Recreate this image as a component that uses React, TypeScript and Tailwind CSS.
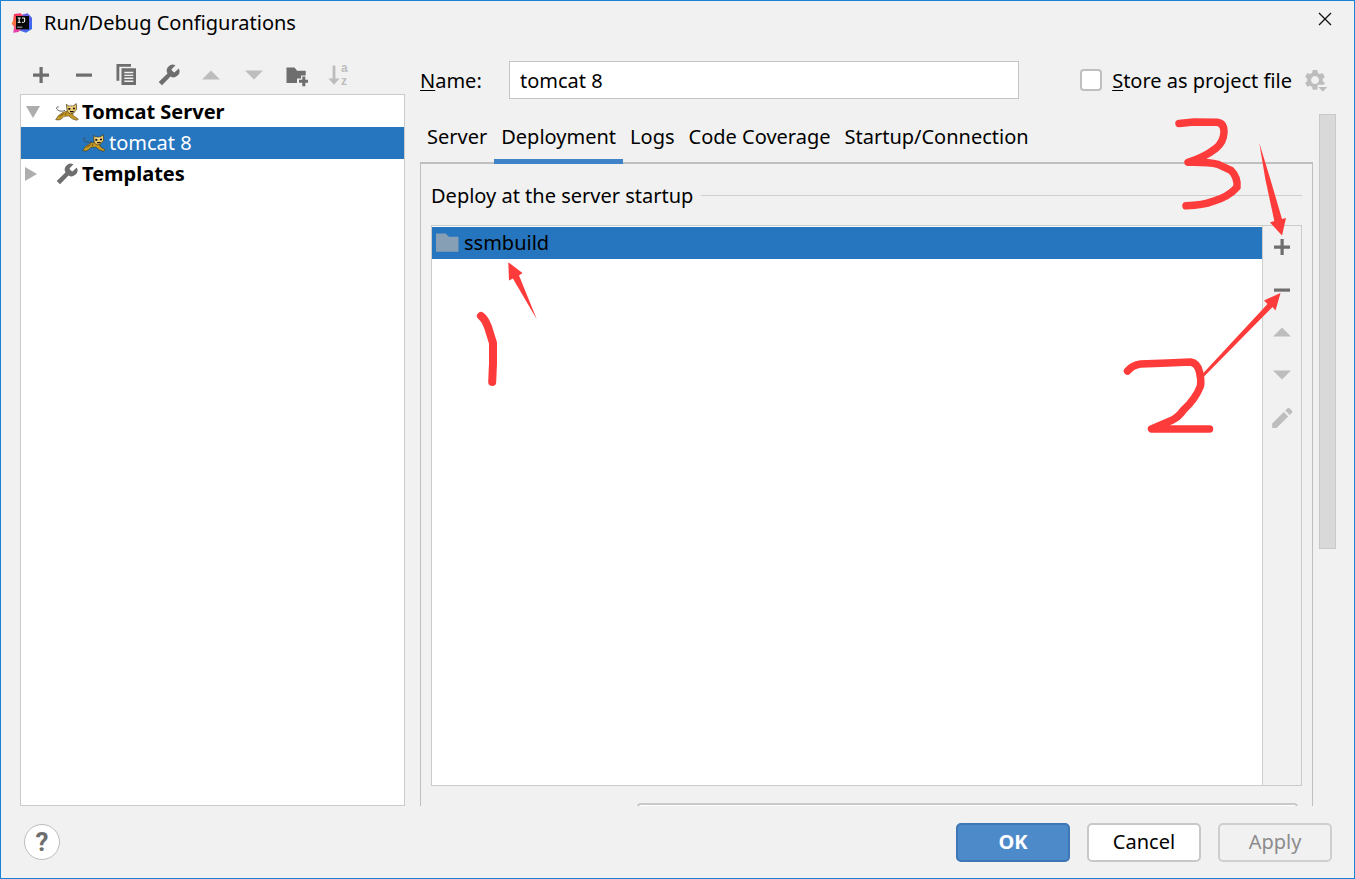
import React, { useState } from "react";

type IconProps = { className?: string };

const PlusIcon = ({ className = "size-6" }: IconProps) => (
  <svg viewBox="0 0 24 24" className={className} fill="currentColor" aria-hidden="true">
    <path d="M10.500 4h3.200v6.500h6.300v3.200h-6.300V20h-3.200v-6.300H4v-3.200h6.500z" />
  </svg>
);

const MinusIcon = () => (
  <svg viewBox="0 0 24 24" className="size-6" fill="currentColor" aria-hidden="true">
    <path d="M4 10.500h16v3.200H4z" />
  </svg>
);

const CopyIcon = () => (
  <svg viewBox="0 0 24 24" className="size-6" fill="currentColor" aria-hidden="true">
    <path d="M2.500 1H17v2.800H5.300v14H2.500z" />
    <path
      fillRule="evenodd"
      d="M7.500 5.300H22V22H7.500zM10.300 8.800v1.400h9V8.800zM10.300 11.700v1.400h9v-1.400zM10.300 14.600v1.400h9v-1.400zM10.300 17.500v1.400h9v-1.400z"
    />
  </svg>
);

const WrenchIcon = () => (
  <svg viewBox="0 0 24 24" className="size-6" fill="currentColor" aria-hidden="true">
    <path d="M14.900 6.100a1 1 0 0 0 0 1.400l1.600 1.600a1 1 0 0 0 1.400 0l3.900-3.600a6 6 0 0 1-8.300 8L5 22.200 1.700 18.900l8.800-8.400a6 6 0 0 1 8-8.200z" />
  </svg>
);

const UpIcon = () => (
  <svg viewBox="0 0 24 24" className="size-6" fill="currentColor" aria-hidden="true">
    <path d="M3 16.600h18L12 7.600z" />
  </svg>
);

const DownIcon = () => (
  <svg viewBox="0 0 24 24" className="size-6" fill="currentColor" aria-hidden="true">
    <path d="M3 7.600h18l-9 9z" />
  </svg>
);

const NewFolderIcon = () => (
  <svg viewBox="0 0 24 24" className="size-6" fill="currentColor" aria-hidden="true">
    <path d="M2.500 4.500h8l2.600 3.200h8.600v4.800h-4.600v3H13V20H2.500z" />
    <path d="M18.300 13.500h3v3.300h3.200v3h-3.200v3.400h-3v-3.400H15v-3h3.300z" />
  </svg>
);

const SortIcon = () => (
  <svg viewBox="0 0 24 24" className="size-6" fill="currentColor" overflow="visible" aria-hidden="true">
    <path d="M5.600 2.500h2.800v13.100h4.200L7 21.800l-5.600-6.200h4.200z" />
    <text x="14" y="9" className="font-['Liberation_Sans'] text-[12px] font-bold">a</text>
    <text x="14" y="22" className="font-['Liberation_Sans'] text-[12px] font-bold">z</text>
  </svg>
);

const PencilIcon = () => (
  <svg viewBox="0 0 24 24" className="size-6" fill="currentColor" aria-hidden="true">
    <path d="M2.200 17.600 13.800 6l4.400 4.400L6.600 22H2.200zM15.200 4.600l2.300-2.300q1-.8 2 0l2.500 2.500q.8 1 0 2L19.700 9.100z" />
  </svg>
);

const GearIcon = () => (
  <svg viewBox="0 0 24 24" className="size-6" fill="currentColor" aria-hidden="true">
    <path
      fillRule="evenodd"
      d="M8.700 2h4.600l.6 2.900 1.900 1.100 2.800-1 2.300 3.900-2.200 2v2.200l2.200 2-.9 1.700h-6.200l-.3 2.800-.2 2.200H8.700l-.6-2.900-1.900-1.100-2.800 1-2.300-3.900 2.200-2v-2.200l-2.200-2L3.400 5l2.800 1 1.900-1.100zM11 8a4 4 0 1 0 .01 0z"
    />
    <path d="M14.300 19h9l-4.500 4.700z" />
  </svg>
);

const FolderIcon = () => (
  <svg viewBox="0 0 24 24" className="size-6" fill="#869fb4" aria-hidden="true">
    <path d="M1 2.500h9.500l3.500 3.200h9.500v15H1z" />
  </svg>
);

const TomcatIcon = () => (
  <svg viewBox="0 0 72 54" className="h-[18px] w-6 shrink-0" strokeLinejoin="round" aria-hidden="true">
    <path d="M30 22C20 27 8 24 5 17c-1-4 2-6 6-5" fill="none" stroke="#444" strokeWidth="2.500" />
    <path
      d="M2 50l8-12 14-10 14-4 14 6 3 8 15 10-4 4-13-4-12-9-14 1-8 8-7 3z"
      fill="#c99b23"
      stroke="#3a3016"
      strokeWidth="1.600"
    />
    <path d="M14 40l12-8M30 36l4-7" fill="none" stroke="#3a3016" strokeWidth="2" />
    <path d="M34 4l7 5h13l10-7 1 17-9 11-10 3-9-6z" fill="#ecc76c" stroke="#3a3016" strokeWidth="2" />
    <path d="M40 15h6v5h-6zM54 14h6v5h-6zM45 24h11v4H45z" fill="#111" />
    <path d="M44 11l5 3 4-3" fill="none" stroke="#fff1b0" strokeWidth="3" />
  </svg>
);

const IdeaLogo = () => (
  <svg viewBox="0 0 66 66" className="size-[22px]" aria-hidden="true">
    <defs>
      <linearGradient id="idea-warm" x1="0" y1="0" x2="0" y2="1">
        <stop offset="0" stopColor="#ff2d6b" />
        <stop offset="0.5" stopColor="#fb7a3a" />
        <stop offset="1" stopColor="#e235c0" />
      </linearGradient>
      <linearGradient id="idea-cool" x1="0" y1="0" x2="1" y2="1">
        <stop offset="0" stopColor="#7c55d8" />
        <stop offset="1" stopColor="#2f6cf6" />
      </linearGradient>
    </defs>
    <path d="M32 8l18-4 13 13v34L45 62l-18-6z" fill="url(#idea-cool)" />
    <path d="M9 6l20-2 12 14-11 34-8 8-15 2 2-18-7-9 4-9z" fill="url(#idea-warm)" />
    <path d="M15 12h39v40H15z" fill="#080808" />
    <path
      d="M20 18h9M24.500 18v13M20 31h9M33 18h8v9q0 4-4 4h-4"
      fill="none"
      stroke="#fff"
      strokeWidth="3"
    />
    <path d="M19 44h15v3H19z" fill="#bbb" />
  </svg>
);

type Tool = { label: string; icon: React.ReactNode; disabled?: boolean };

const toolbar: Tool[] = [
  { label: "Add New Configuration", icon: <PlusIcon /> },
  { label: "Remove Configuration", icon: <MinusIcon /> },
  { label: "Copy Configuration", icon: <CopyIcon /> },
  { label: "Edit Templates", icon: <WrenchIcon /> },
  { label: "Move Up", icon: <UpIcon />, disabled: true },
  { label: "Move Down", icon: <DownIcon />, disabled: true },
  { label: "Create New Folder", icon: <NewFolderIcon /> },
  { label: "Sort Configurations", icon: <SortIcon />, disabled: true },
];

const artifactTools: Tool[] = [
  { label: "Add Artifact", icon: <PlusIcon /> },
  { label: "Remove Artifact", icon: <MinusIcon /> },
  { label: "Move Artifact Up", icon: <UpIcon />, disabled: true },
  { label: "Move Artifact Down", icon: <DownIcon />, disabled: true },
  { label: "Edit Artifact", icon: <PencilIcon />, disabled: true },
];

const tabs = ["Server", "Deployment", "Logs", "Code Coverage", "Startup/Connection"];

function ToolButton({ tool }: { tool: Tool }) {
  return (
    <button
      type="button"
      aria-label={tool.label}
      disabled={tool.disabled}
      className="flex size-full items-center justify-center text-[#6e6e6e] disabled:text-[#bdbdbd]"
    >
      {tool.icon}
    </button>
  );
}

function ConfigurationTree() {
  return (
    <ul role="tree" aria-label="Configurations" className="flex-1 border border-[#cbcbcb] bg-white">
      <li role="treeitem" aria-expanded="true" className="flex h-8 items-center pt-px pl-1 font-bold">
        <svg viewBox="0 0 16 16" className="size-4 text-[#adadad]" fill="currentColor" aria-hidden="true">
          <path d="M1 2h14L8 14z" />
        </svg>
        <span className="ml-[14px] flex items-center gap-[3px]">
          <TomcatIcon />
          Tomcat Server
        </span>
      </li>
      <li
        role="treeitem"
        aria-selected="true"
        className="flex h-8 items-center gap-[3px] bg-[#2675bf] pl-[61px] text-white"
      >
        <TomcatIcon />
        tomcat 8
      </li>
      <li role="treeitem" aria-expanded="false" className="flex h-[30px] items-center pl-1 font-bold">
        <svg viewBox="0 0 16 16" className="size-4 text-[#adadad]" fill="currentColor" aria-hidden="true">
          <path d="M0 1l12 7-12 7z" />
        </svg>
        <span className="ml-[14px] flex items-center gap-[3px]">
          <span className="text-[#6e6e6e]">
            <WrenchIcon />
          </span>
          Templates
        </span>
      </li>
    </ul>
  );
}

function ArtifactList() {
  return (
    <div className="relative mt-[15px] flex flex-1 border border-[#cbcbcb]">
      <ul role="listbox" aria-label="Deploy at the server startup" className="flex-1 bg-white pt-px">
        <li role="option" aria-selected="true" className="flex h-8 items-center gap-[5px] bg-[#2675bf] pl-[3px]">
          <FolderIcon />
          ssmbuild
        </li>
      </ul>
      <div className="w-[39px] border-l border-[#cbcbcb]">
        <div className="grid h-[213px] grid-rows-5">
          {artifactTools.map((tool) => (
            <ToolButton key={tool.label} tool={tool} />
          ))}
        </div>
      </div>

      <svg
        viewBox="470 255 80 140"
        className="pointer-events-none absolute top-[29px] left-[38px] h-[140px] w-[80px]"
        aria-hidden="true"
      >
        <path d="M508.300 262.300l14.200 10.700-3.500 2.500 17.900 44-24-41-3.900 2z" fill="#fd3b3a" />
        <path
          d="M481 316q4 3 7 11l5 16v20l-.8 19"
          fill="none"
          stroke="#fd3b3a"
          strokeWidth="8"
          strokeLinecap="round"
          strokeLinejoin="round"
        />
      </svg>

      <svg
        viewBox="1112 114 190 330"
        className="pointer-events-none absolute -top-28 -right-px h-[330px] w-[190px]"
        aria-hidden="true"
      >
        <g fill="#fd3b3a">
          <path d="M1259.300 143l11 36 11.700 40 4-1-4 17.500-12-13 4.300-1.600-9-42z" />
          <path d="M1280.500 293l-5 17.500-3-3.500-69 70-2-2 66-71-3.500-3.500z" />
        </g>
        <g fill="none" stroke="#fd3b3a" strokeWidth="7.500" strokeLinecap="round" strokeLinejoin="round">
          <path d="M1179 123.500l15-1.500 23 .3q7 .5 7 10-.5 10-8 16-13 10-28 14 20-.5 30 2l13 6q7 7 6 17-9 10-24 14-10 4-27 4.500" />
          <path d="M1127.500 371q5-6 13-7l27-1 23-1q7 1 9 10 2 8 1 14-5 13-17 24-5 7-11 10l-21 9h58" />
        </g>
      </svg>
    </div>
  );
}

export default function App() {
  const [name, setName] = useState("tomcat 8");
  const [stored, setStored] = useState(false);

  return (
    <div className="flex h-screen flex-col border border-[#1883d7] bg-[#f1f1f1] font-['Noto_Sans',sans-serif] text-[20px] leading-7 text-black">
      <header className="flex h-11 items-center pl-[10px]">
        <IdeaLogo />
        <h1 className="ml-[11px]">Run/Debug Configurations</h1>
        <button
          type="button"
          aria-label="Close"
          className="ml-auto flex h-9 w-[58px] items-center justify-center self-start"
        >
          <svg viewBox="0 0 14 14" className="size-[14px]" fill="none" stroke="#111" strokeWidth="1.300" aria-hidden="true">
            <path d="M1 1l12 12M13 1L1 13" />
          </svg>
        </button>
      </header>

      <main className="flex min-h-0 flex-1 gap-[15px] pr-[18px] pl-[19px]">
        <section className="flex w-[385px] shrink-0 flex-col pt-3">
          <div
            role="toolbar"
            aria-label="Configuration actions"
            className="grid h-[37px] w-[340px] grid-cols-8 pb-px"
          >
            {toolbar.map((tool) => (
              <ToolButton key={tool.label} tool={tool} />
            ))}
          </div>
          <ConfigurationTree />
        </section>

        <section className="flex min-w-0 flex-1 flex-col pt-4">
          <div className="flex h-[38px] shrink-0 items-center">
            <label htmlFor="config-name" className="w-[89px] pt-px">
              <span className="underline decoration-1 underline-offset-2">N</span>ame:
            </label>
            <input
              id="config-name"
              type="text"
              value={name}
              onChange={(e) => setName(e.target.value)}
              className="h-full w-[510px] border border-[#c4c4c4] bg-white px-[10px] outline-none"
            />
            <div className="ml-auto flex items-center pr-2">
              <input
                id="store-project"
                type="checkbox"
                checked={stored}
                onChange={(e) => setStored(e.target.checked)}
                className="size-[22px] appearance-none rounded-[4px] border-2 border-[#bfbfbf] bg-white checked:bg-[#4a88c9]"
              />
              <label htmlFor="store-project" className="ml-[10px] pt-px">
                <span className="underline decoration-1 underline-offset-2">S</span>tore as project file
              </label>
              <button type="button" aria-label="Storage options" className="ml-3 text-[#bdbdbd]">
                <GearIcon />
              </button>
            </div>
          </div>

          <div className="mt-[15px] flex min-h-0 flex-1 gap-[6px]">
            <div className="flex min-w-0 flex-1 flex-col">
              <div role="tablist" className="flex h-[50px] shrink-0 border-b-2 border-[#bfbfbf]">
                {tabs.map((tab) => (
                  <button
                    key={tab}
                    type="button"
                    role="tab"
                    aria-selected={tab === "Deployment"}
                    className="h-[50px] border-b-[5px] border-transparent px-[7px] aria-selected:border-[#4083c9]"
                  >
                    {tab}
                  </button>
                ))}
              </div>
              <div
                role="tabpanel"
                className="flex min-h-0 flex-1 flex-col border-x border-[#bfbfbf] px-[10px] pt-4"
              >
                <div className="flex h-[30px] shrink-0 items-center gap-2">
                  <h2 className="pt-px">Deploy at the server startup</h2>
                  <span className="h-px flex-1 bg-[#cfcfcf]" />
                </div>
                <ArtifactList />
                <div className="mt-[17px] h-[3px] shrink-0 overflow-hidden pr-1 pl-[206px]">
                  <select
                    aria-label="Application context"
                    className="h-9 w-full appearance-none rounded-[4px] border-2 border-[#c9c9c9] bg-white"
                  />
                </div>
              </div>
            </div>
            <div className="w-[17px] shrink-0">
              <div className="h-[435px] border border-[#c9c9c9] bg-[#d9d9d9]" />
            </div>
          </div>
        </section>
      </main>

      <footer className="flex h-[72px] shrink-0 items-center gap-[17px] pr-[22px] pl-[23px]">
        <button
          type="button"
          aria-label="Help"
          className="mr-auto flex size-9 items-center justify-center rounded-full border border-[#bdbdbd] bg-white font-['Roboto'] text-[26px] font-bold text-[#6e6e6e]"
        >
          ?
        </button>
        <button
          type="button"
          className="h-[39px] w-[114px] rounded-[5px] border-2 border-[#3f76b5] bg-[#4d8ac9] font-bold text-white"
        >
          OK
        </button>
        <button type="button" className="h-[39px] w-[114px] rounded-[5px] border-2 border-[#c8c8c8] bg-white">
          Cancel
        </button>
        <button
          type="button"
          disabled
          className="h-[39px] w-[114px] rounded-[5px] border-2 border-[#cfcfcf] text-[#8c8c8c]"
        >
          Apply
        </button>
      </footer>
    </div>
  );
}
